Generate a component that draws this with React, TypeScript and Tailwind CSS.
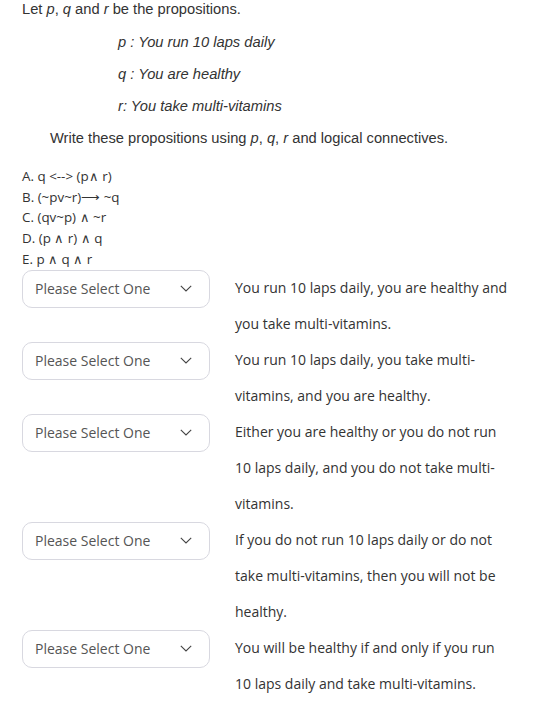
const rows = [
  ['You run 10 laps daily, you are healthy and you take multi-vitamins.'],
  ['You run 10 laps daily, you take multi-vitamins, and you are healthy.'],
  ['Either you are healthy or you do not run 10 laps daily, and you do not take multi-vitamins.'],
  ['If you do not run 10 laps daily or do not take multi-vitamins, then you will not be healthy.'],
  ['You will be healthy if and only if you run 10 laps daily and take multi-vitamins.'],
];

const options = ['A. q <--> (p\u2227 r)', 'B. (~pv~r)\u27f6 ~q', 'C. (qv~p) \u2227 ~r', 'D. (p \u2227 r) \u2227 q', 'E. p \u2227 q \u2227 r'];

function Chevron() {
  return (
    <svg className="w-[12px] h-[7px] text-[#444]" viewBox="0 0 12 7" fill="none">
      <path d="M0.8 0.8 L6 6 L11.2 0.8" stroke="currentColor" strokeWidth="1.1" />
    </svg>
  );
}

function SelectBox() {
  return (
    <div className="w-[188px] h-[38px] shrink-0 rounded-[10px] border border-[#d8d8e0] bg-white flex items-center justify-between pl-[12px] pr-[17px]">
      <span className="text-[14px] text-[#555]">Please Select One</span>
      <Chevron />
    </div>
  );
}

export default function App() {
  return (
    <div className="bg-white min-h-[721px] text-[#333]">
      <div className="font-['Liberation_Sans',Arial,sans-serif] text-[14.7px]">
        <p className="pl-[22px] leading-[18px]">
          Let <i>p</i>, <i>q</i> and <i>r</i> be the propositions.
        </p>
        <div className="pl-[118px] pt-[8px] italic leading-[32px]">
          <p>p : You run 10 laps daily</p>
          <p>q : You are healthy</p>
          <p>r: You take multi-vitamins</p>
        </div>
        <p className="pl-[50px] leading-[32px]">
          Write these propositions using <i>p</i>, <i>q</i>, <i>r</i> and logical connectives.
        </p>
      </div>
      <div className="font-['Open_Sans',sans-serif] pl-[22px]">
        <ul className="pt-[12px] text-[13.4px] leading-[20.7px] text-[#333]">
          {options.map((o) => (
            <li key={o}>{o}</li>
          ))}
        </ul>
        <div className="flex flex-col">
          {rows.map(([t]) => (
            <div key={t} className="flex gap-[25px]">
              <SelectBox />
              <p className="w-[276px] text-[14px] leading-[36px] text-[#333]">{t}</p>
            </div>
          ))}
        </div>
      </div>
    </div>
  );
}
